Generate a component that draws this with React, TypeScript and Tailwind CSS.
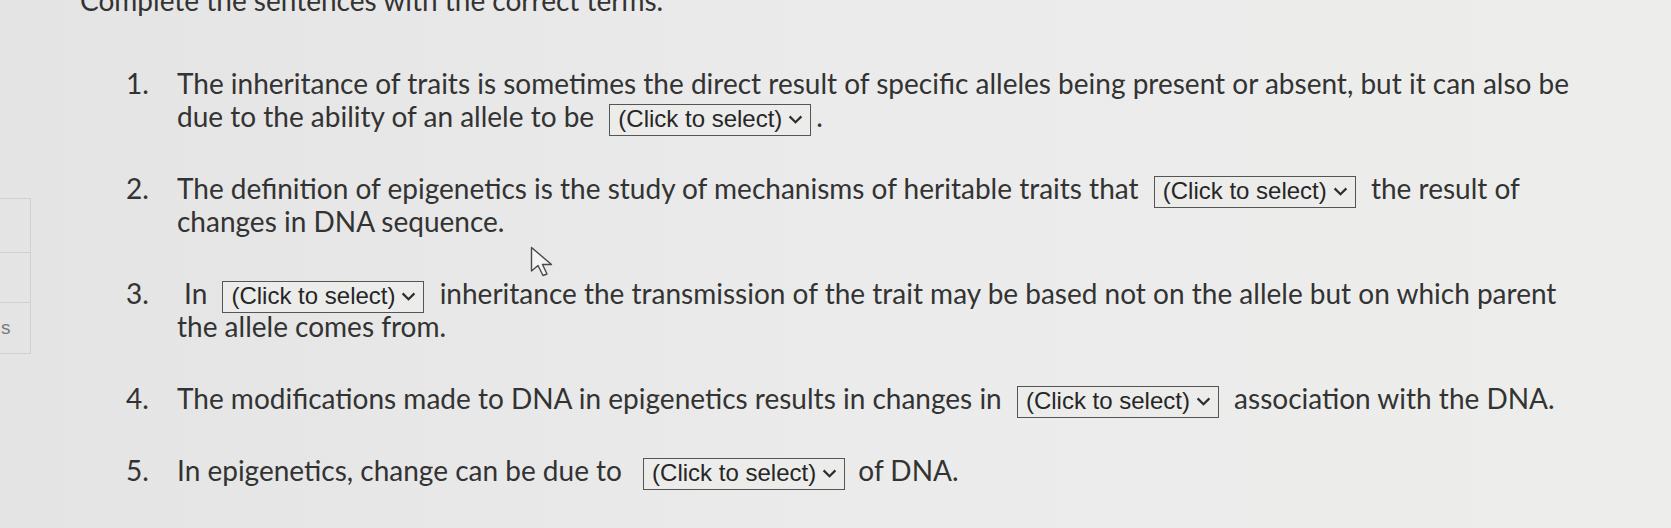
import React from "react";

function Select({ className = "" }: { className?: string }) {
  return (
    <span
      className={
        "inline-block align-baseline -mb-[4px] h-[32px] border border-[#555555] bg-[#ececeb] pl-[8px] pr-[7px] pb-[3px] font-['Liberation_Sans',Arial,sans-serif] text-[24px] leading-[27px] text-[#262626] whitespace-nowrap " +
        className
      }
    >
      (Click to select)
      <svg
        className="inline-block ml-[6px] align-[3px]"
        width="15"
        height="9"
        viewBox="0 0 15 9"
      >
        <path d="M1.6 1.4 L7.5 7.3 L13.4 1.4" fill="none" stroke="#2e2e2e" strokeWidth="2.2" />
      </svg>
    </span>
  );
}

function Item({ n, children }: { n: string; children: React.ReactNode }) {
  return (
    <li className="flex">
      <span className="w-[51px] shrink-0">{n}</span>
      <p className="w-[1480px]">{children}</p>
    </li>
  );
}

function Cursor() {
  return (
    <svg
      className="absolute left-[530px] top-[246px]"
      width="27"
      height="31"
      viewBox="0 0 27 31"
    >
      <path
        d="M1.5 1.5 L1.5 25 L8 19.5 L13 29.5 L17 28 L12.5 18.5 L21.5 18.5 Z"
        fill="#f4f4f4"
        stroke="#4a4a4a"
        strokeWidth="1.4"
        strokeLinejoin="round"
      />
    </svg>
  );
}

export default function App() {
  return (
    <div className="relative w-[1671px] h-[528px] overflow-hidden bg-gradient-to-r from-[#e3e4e3] via-[#eaebea] to-[#edeeec] font-['Lato','Open_Sans',sans-serif] text-[#333333]">
      <div className="flex items-start">
        <div className="mt-[198px] w-[31px] shrink-0 border-r border-[#cfd0cf] font-['Liberation_Sans',sans-serif] text-[19px] text-[#7a7a7a]">
          <div className="h-[54px] border-t border-[#cfd0cf]" />
          <div className="h-[50px] border-t border-[#cfd0cf]" />
          <div className="flex h-[52px] items-center border-y border-[#cfd0cf] pl-[1px]">s</div>
        </div>
        <div className="-mt-[15px] ml-[49px] flex flex-col">
          <h2 className="text-[28px] leading-[30px]">Complete the sentences with the correct terms.</h2>
          <ol className="ml-[46px] mt-[52px] flex flex-col gap-[39px] text-[28px] leading-[33px]">
            <Item n="1.">
              The inheritance of traits is sometimes the direct result of specific alleles being present or absent, but it can also be
              <br />
              due to the ability of an allele to be <Select className="ml-[8px] mr-[5px]" />.
            </Item>
            <Item n="2.">
              The definition of epigenetics is the study of mechanisms of heritable traits that <Select className="mx-[8px]" /> the result of
              <br />
              changes in DNA sequence.
            </Item>
            <Item n="3.">
              <span className="ml-[7px]">In</span> <Select className="mx-[8px]" /> inheritance the transmission of the trait may be based not on the allele but on which parent
              <br />
              the allele comes from.
            </Item>
            <Item n="4.">
              The modifications made to DNA in epigenetics results in changes in <Select className="mx-[8px]" /> association with the DNA.
            </Item>
            <Item n="5.">
              In epigenetics, change can be due to <Select className="ml-[14px] mr-[6px]" /> of DNA.
            </Item>
          </ol>
        </div>
      </div>
      <Cursor />
    </div>
  );
}
